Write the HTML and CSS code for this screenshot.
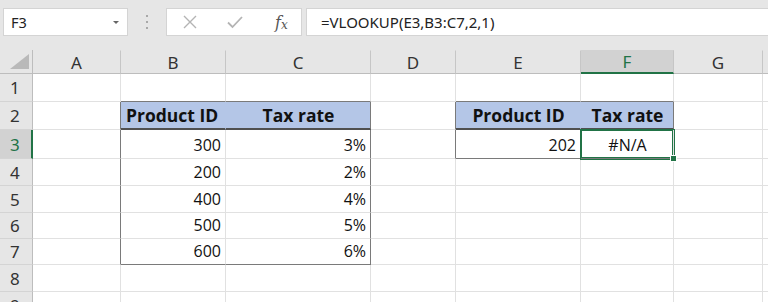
FILE: index.html
```html
<!DOCTYPE html>
<html lang="en">

<head>
  <meta charset="UTF-8">
  <title>VLOOKUP #N/A</title>
  <link rel="stylesheet" href="styles.css">
</head>

<body>
  <div class="toolbar">
    <div class="namebox">
      <span>F3</span>
      <span class="caret"></span>
    </div>
    <div class="grip"><i></i><i></i><i></i></div>
    <div class="fx-buttons">
      <svg width="16" height="16" viewBox="0 0 16 16">
        <path d="M2 2 L14 14 M14 2 L2 14" stroke="#b4b4b4" stroke-width="1.4" fill="none" />
      </svg>
      <svg width="18" height="16" viewBox="0 0 18 16">
        <path d="M2 8.5 L6.5 13 L16 3" stroke="#b4b4b4" stroke-width="1.8" fill="none" />
      </svg>
      <span class="fx">f<sub>x</sub></span>
    </div>
    <div class="formula">=VLOOKUP(E3,B3:C7,2,1)</div>
  </div>

  <div class="sheet">
    <!-- column headers -->
    <div class="corner"><span></span></div>
    <div class="colhead">A</div>
    <div class="colhead">B</div>
    <div class="colhead">C</div>
    <div class="colhead">D</div>
    <div class="colhead">E</div>
    <div class="colhead active">F</div>
    <div class="colhead">G</div>
    <div class="colhead"></div>

    <!-- row 1 -->
    <div class="rowhead">1</div>
    <div class="cell"></div>
    <div class="cell top-edge"></div>
    <div class="cell top-edge"></div>
    <div class="cell"></div>
    <div class="cell top-edge"></div>
    <div class="cell top-edge"></div>
    <div class="cell"></div>
    <div class="cell"></div>

    <!-- row 2 -->
    <div class="rowhead">2</div>
    <div class="cell left-edge"></div>
    <div class="cell th left">Product ID</div>
    <div class="cell th last">Tax rate</div>
    <div class="cell left-edge"></div>
    <div class="cell th">Product ID</div>
    <div class="cell th last">Tax rate</div>
    <div class="cell"></div>
    <div class="cell"></div>

    <!-- row 3 -->
    <div class="rowhead active">3</div>
    <div class="cell left-edge"></div>
    <div class="cell num">300</div>
    <div class="cell num right-edge">3%</div>
    <div class="cell left-edge"></div>
    <div class="cell num bottom-edge">202</div>
    <div class="cell center bottom-edge selected">#N/A</div>
    <div class="cell"></div>
    <div class="cell"></div>

    <!-- row 4 -->
    <div class="rowhead">4</div>
    <div class="cell left-edge"></div>
    <div class="cell num">200</div>
    <div class="cell num right-edge">2%</div>
    <div class="cell"></div>
    <div class="cell"></div>
    <div class="cell"></div>
    <div class="cell"></div>
    <div class="cell"></div>

    <!-- row 5 -->
    <div class="rowhead">5</div>
    <div class="cell left-edge"></div>
    <div class="cell num">400</div>
    <div class="cell num right-edge">4%</div>
    <div class="cell"></div>
    <div class="cell"></div>
    <div class="cell"></div>
    <div class="cell"></div>
    <div class="cell"></div>

    <!-- row 6 -->
    <div class="rowhead">6</div>
    <div class="cell left-edge"></div>
    <div class="cell num">500</div>
    <div class="cell num right-edge">5%</div>
    <div class="cell"></div>
    <div class="cell"></div>
    <div class="cell"></div>
    <div class="cell"></div>
    <div class="cell"></div>

    <!-- row 7 -->
    <div class="rowhead">7</div>
    <div class="cell left-edge"></div>
    <div class="cell num bottom-edge">600</div>
    <div class="cell num right-edge bottom-edge">6%</div>
    <div class="cell"></div>
    <div class="cell"></div>
    <div class="cell"></div>
    <div class="cell"></div>
    <div class="cell"></div>

    <!-- row 8 -->
    <div class="rowhead">8</div>
    <div class="cell"></div>
    <div class="cell"></div>
    <div class="cell"></div>
    <div class="cell"></div>
    <div class="cell"></div>
    <div class="cell"></div>
    <div class="cell"></div>
    <div class="cell"></div>

    <!-- row 9 -->
    <div class="rowhead">9</div>
    <div class="cell"></div>
    <div class="cell"></div>
    <div class="cell"></div>
    <div class="cell"></div>
    <div class="cell"></div>
    <div class="cell"></div>
    <div class="cell"></div>
    <div class="cell"></div>
  </div>
</body>

</html>
```

FILE: styles.css
```css
body {
  margin: 0;
  font-family: 'Noto Sans', sans-serif;
  background: #ffffff;
  overflow: hidden;
}

/* formula bar */
.toolbar {
  display: flex;
  align-items: flex-start;
  height: 50px;
  padding-top: 8px;
  box-sizing: border-box;
  background: #e6e6e6;
}

.namebox {
  display: flex;
  align-items: center;
  justify-content: space-between;
  width: 125px;
  height: 28px;
  margin-left: 3px;
  padding: 0 8px 0 7px;
  box-sizing: border-box;
  background: #fff;
  border: 1px solid #d4d4d4;
  font-size: 14.5px;
  color: #222;
}

.caret {
  width: 0;
  height: 0;
  border-left: 3px solid transparent;
  border-right: 3px solid transparent;
  border-top: 3px solid #666;
}

.grip {
  display: flex;
  flex-direction: column;
  gap: 4px;
  margin: 7px 18px 0 18px;
}

.grip i {
  width: 2px;
  height: 2px;
  background: #a8a8a8;
}

.fx-buttons {
  display: flex;
  align-items: center;
  gap: 28px;
  width: 136px;
  height: 28px;
  padding-left: 15px;
  box-sizing: border-box;
  background: #fff;
  border: 1px solid #d4d4d4;
}

.fx {
  font-family: 'DejaVu Serif', serif;
  font-style: italic;
  font-size: 16px;
  color: #555;
  margin-left: 3px;
}

.fx sub {
  font-size: 12px;
  vertical-align: -1px;
}

.formula {
  flex: 1;
  height: 28px;
  margin-left: 4px;
  padding-left: 14px;
  box-sizing: border-box;
  background: #fff;
  border: 1px solid #d4d4d4;
  border-right: none;
  font-size: 15px;
  line-height: 26px;
  color: #222;
}

/* grid */
.sheet {
  display: grid;
  grid-template-columns: 33px 88px 105px 145px 85px 125px 93px 89px 1fr;
  grid-template-rows: 24px 28px 28px 29px 27px 27px 26px 26px 27px 27px;
}

.corner,
.colhead,
.rowhead {
  background: #e6e6e6;
  color: #333;
  font-size: 17px;
  box-sizing: border-box;
}

.corner {
  border-right: 1px solid #bdbdbd;
  border-bottom: 1px solid #bdbdbd;
  display: flex;
  align-items: flex-end;
  justify-content: flex-end;
  padding: 0 3px 4px 0;
}

.corner span {
  width: 0;
  height: 0;
  border-left: 19px solid transparent;
  border-bottom: 15px solid #b9b9b9;
}

.colhead {
  display: flex;
  align-items: center;
  justify-content: center;
  border-right: 1px solid #c6c6c6;
  border-bottom: 1px solid #bdbdbd;
  border-top: 1px solid transparent;
}

.colhead.active {
  background: #d2d2d2;
  color: #217346;
  border-bottom: 2px solid #217346;
}

.rowhead {
  display: flex;
  align-items: center;
  padding-left: 10px;
  border-right: 1px solid #bdbdbd;
  border-bottom: 1px solid #d4d4d4;
}

.rowhead.active {
  background: #d2d2d2;
  color: #217346;
  border-right: 2px solid #217346;
}

.cell {
  display: flex;
  align-items: flex-end;
  padding: 0 4px 2px 5px;
  box-sizing: border-box;
  border-right: 1px solid #e1e1e1;
  border-bottom: 1px solid #e1e1e1;
  font-family: 'Open Sans', sans-serif;
  font-size: 16px;
  color: #111;
  white-space: nowrap;
}

.num {
  justify-content: flex-end;
}

.center {
  justify-content: center;
}

/* table outline */
.top-edge {
  border-bottom-color: #7a7a7a;
}

.left-edge {
  border-right-color: #7a7a7a;
}

.right-edge {
  border-right-color: #7a7a7a;
}

.bottom-edge {
  border-bottom-color: #7a7a7a;
}

.th {
  background: #b4c6e7;
  font-size: 17.5px;
  font-weight: bold;
  justify-content: center;
  border-right-color: #b4c6e7;
  border-bottom: 2px solid #505050;
  padding-bottom: 1px;
}

.th.left {
  justify-content: flex-start;
}

.th.last {
  border-right-color: #7a7a7a;
}

.selected {
  position: relative;
  z-index: 1;
  box-shadow: 0 0 0 1px #217346, inset 0 0 0 1px #217346;
}

.selected::after {
  content: "";
  position: absolute;
  right: -4px;
  bottom: -4px;
  width: 5px;
  height: 5px;
  background: #217346;
  border: 1px solid #fff;
}
```
